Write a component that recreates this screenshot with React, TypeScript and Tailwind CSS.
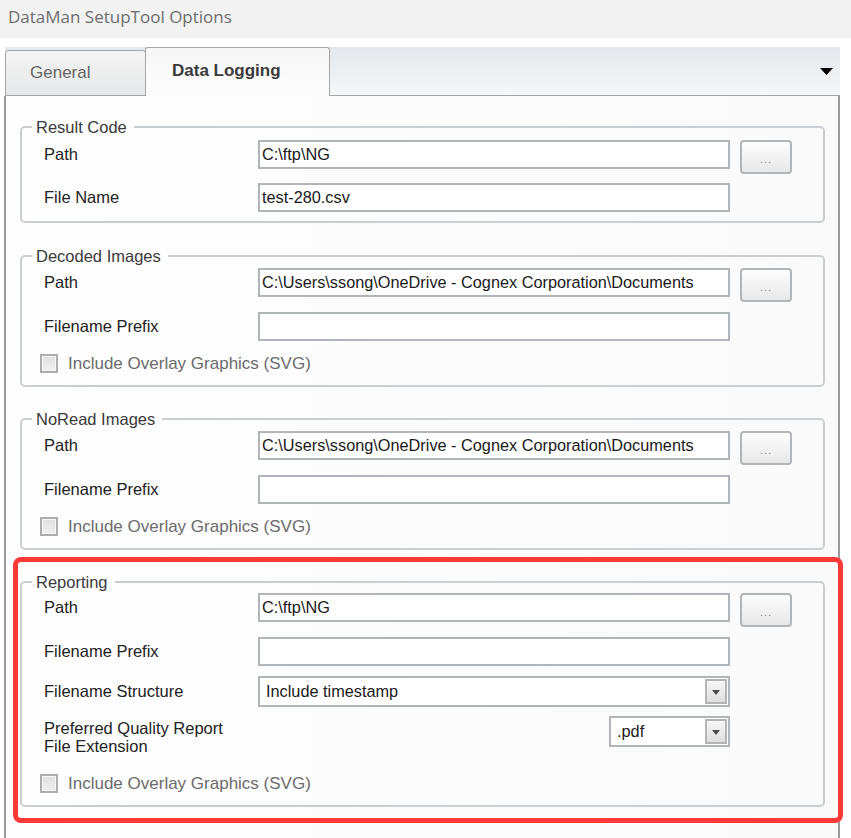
import React from "react";

const LABEL_W = "w-[214px]";

function Label({ children }: { children: React.ReactNode }) {
  return (
    <div className={`${LABEL_W} shrink-0 h-full flex items-center text-[16.5px] text-[#222] whitespace-nowrap`}>
      {children}
    </div>
  );
}

function TextBox({ value = "" }: { value?: string }) {
  return (
    <div className="h-[29px] w-[472px] shrink-0 border-2 border-[#b1b4b8] bg-white flex items-center pl-[2px] text-[16.3px] text-[#1a1a1a] whitespace-nowrap overflow-hidden">
      {value}
    </div>
  );
}

function BrowseButton() {
  return (
    <button className="ml-[10px] h-[34px] w-[52px] shrink-0 rounded-[4px] border-2 border-[#b3b6b9] bg-linear-to-b from-[#fdfdfd] to-[#e8e8e8] flex items-center justify-center pt-[5px] text-[11px] leading-none text-[#8a8a8a] tracking-[1px]">
      ...
    </button>
  );
}

function Row({ label, value, browse, className = "" }: { label: string; value?: string; browse?: boolean; className?: string }) {
  return (
    <div className={`flex h-[29px] items-start ${className}`}>
      <Label>{label}</Label>
      <TextBox value={value} />
      {browse && <BrowseButton />}
    </div>
  );
}

function ArrowBox() {
  return (
    <div className="h-[25px] w-[22px] shrink-0 border-2 border-[#b4b4b4] bg-linear-to-b from-[#f7f7f7] to-[#dedede] flex items-center justify-center pt-[2px]">
      <svg width="8" height="5" viewBox="0 0 8 5">
        <path d="M0 0 L8 0 L4 5 Z" fill="#4a4a4a" />
      </svg>
    </div>
  );
}

function Combo({ value, className = "" }: { value: string; className?: string }) {
  return (
    <div className={`h-[31px] border-2 border-[#b1b4b8] bg-white flex items-center pl-[6px] pr-[1px] ${className}`}>
      <div className="flex-1 text-[16.3px] text-[#1a1a1a] whitespace-nowrap">{value}</div>
      <ArrowBox />
    </div>
  );
}

function CheckRow({ className = "" }: { className?: string }) {
  return (
    <div className={`flex h-[20px] items-center -ml-[4px] ${className}`}>
      <span className="h-[19px] w-[18px] shrink-0 border-2 border-[#adadad] bg-linear-to-b from-[#e0e0e0] to-[#f0f0f0] shadow-[inset_0_0_0_1px_#f6f6f6]" />
      <span className="ml-[10px] pt-[2px] text-[17px] text-[#6b6b6b] whitespace-nowrap">Include Overlay Graphics (SVG)</span>
    </div>
  );
}

function Group({ title, children, className = "", innerClass = "" }: { title: string; children: React.ReactNode; className?: string; innerClass?: string }) {
  return (
    <fieldset className={`w-full min-w-0 border-2 border-[#cbced1] rounded-[5px] ${className}`}>
      <legend className="ml-[10px] pl-[4px] pr-[7px] leading-[18px] text-[16.5px] text-[#3a3a3a]">{title}</legend>
      <div className={`pl-[22px] ${innerClass}`}>{children}</div>
    </fieldset>
  );
}

export default function App() {
  return (
    <div className="h-[838px] w-[851px] overflow-hidden bg-white flex flex-col font-['Liberation_Sans',Arial,sans-serif]">
      {/* Title bar */}
      <div className="h-[38px] shrink-0 bg-[#f2f2f2] pl-[8px] pt-[5px]">
        <div className="font-['Open_Sans','Noto_Sans',sans-serif] text-[17px] leading-[23px] text-[#6e6e6e]">DataMan SetupTool Options</div>
      </div>
      <div className="h-[9px] shrink-0" />

      {/* Tab strip */}
      <div className="h-[49px] shrink-0 ml-[5px] w-[835px] flex items-end bg-linear-to-b from-[#e4e8ec] to-[#f6f7f8]">
        <div className="h-[46px] w-[141px] shrink-0 rounded-t-[3px] border border-[#a5a5a5] bg-linear-to-b from-[#f4f4f4] to-[#e7e8e9] flex items-center pl-[24px] pb-[1px] text-[17px] text-[#666]">
          General
        </div>
        <div className="h-[49px] w-[185px] shrink-0 -ml-[1px] rounded-t-[3px] border border-b-0 border-[#a5a5a5] bg-linear-to-b from-[#f7f7f7] to-[#fdfdfd] flex items-center pl-[26px] pb-[2px] text-[17px] font-bold text-[#3a3a3a]">
          Data Logging
        </div>
        <div className="flex-1 h-full border-b border-[#a5a5a5] flex items-center justify-end pr-[7px]">
          <svg width="13" height="7" viewBox="0 0 13 7">
            <path d="M0 0 L13 0 L6.5 7 Z" fill="#000" />
          </svg>
        </div>
      </div>

      {/* Panel */}
      <div className="flex-1 ml-[4px] w-[836px] border-l-2 border-r-2 border-[#9b9b9b] bg-linear-to-r from-[#fefefe] to-[#fafafa] pl-[14px] pr-[13px] pt-[22px]">
        <Group title="Result Code" innerClass="pt-[4px] pb-[9px]">
          <Row label="Path" value="C:\ftp\NG" browse />
          <Row label="File Name" value="test-280.csv" className="mt-[14px]" />
        </Group>

        <Group title="Decoded Images" className="mt-[24px]" innerClass="pt-[3px] pb-[12px]">
          <Row label="Path" value="C:\Users\ssong\OneDrive - Cognex Corporation\Documents" browse />
          <Row label="Filename Prefix" className="mt-[15px]" />
          <CheckRow className="mt-[12px]" />
        </Group>

        <Group title="NoRead Images" className="mt-[23px]" innerClass="pt-[3px] pb-[12px]">
          <Row label="Path" value="C:\Users\ssong\OneDrive - Cognex Corporation\Documents" browse />
          <Row label="Filename Prefix" className="mt-[15px]" />
          <CheckRow className="mt-[12px]" />
        </Group>

        <div className="mt-[7px] -ml-[7px] -mr-[18px] rounded-[8px] border-[5px] border-[#ff3838] pl-[2px] pr-[13px] pt-[11px] pb-[11px]">
          <Group title="Reporting" innerClass="pt-[2px] pb-[12px]">
            <Row label="Path" value="C:\ftp\NG" browse />
            <Row label="Filename Prefix" className="mt-[15px]" />
            <div className="mt-[10px] flex h-[31px] items-start">
              <Label>Filename Structure</Label>
              <Combo value="Include timestamp" className="w-[472px]" />
            </div>
            <div className="mt-[9px] flex items-start">
              <div className={`${LABEL_W} shrink-0 pt-[3px] text-[16.5px] leading-[18px] text-[#222]`}>
                Preferred Quality Report
                <br />
                File Extension
              </div>
              <div className="w-[472px] flex justify-end">
                <Combo value=".pdf" className="w-[121px]" />
              </div>
            </div>
            <CheckRow className="mt-[18px]" />
          </Group>
        </div>
      </div>
    </div>
  );
}
